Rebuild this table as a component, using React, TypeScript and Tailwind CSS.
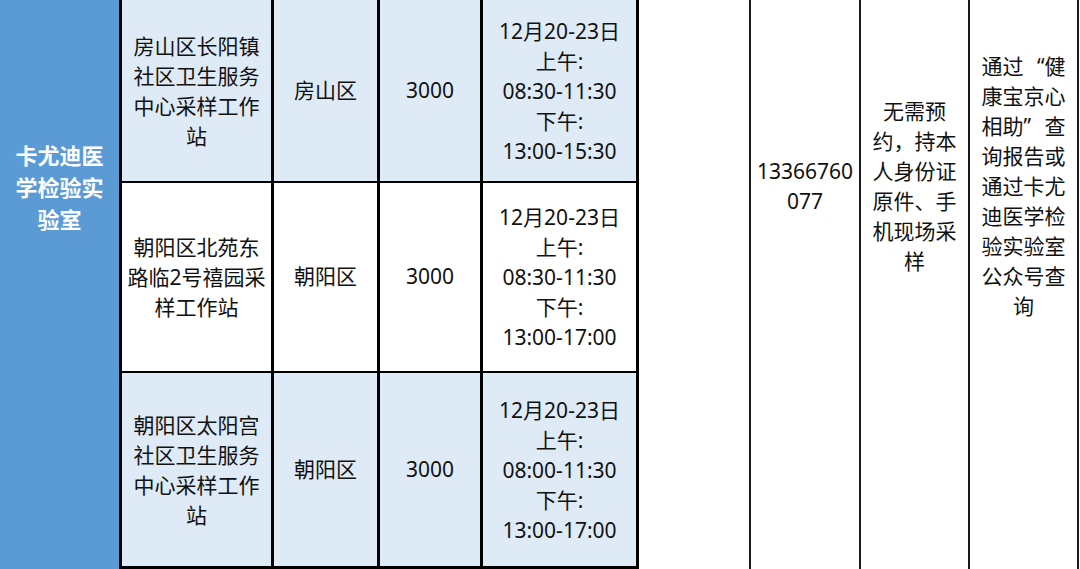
const rows = [
  {
    name: ["房山区长阳镇", "社区卫生服务", "中心采样工作", "站"],
    district: "房山区",
    cap: "3000",
    time: ["12月20-23日", "上午:", "08:30-11:30", "下午:", "13:00-15:30"],
    shaded: true,
  },
  {
    name: ["朝阳区北苑东", "路临2号禧园采", "样工作站"],
    district: "朝阳区",
    cap: "3000",
    time: ["12月20-23日", "上午:", "08:30-11:30", "下午:", "13:00-17:00"],
    shaded: false,
  },
  {
    name: ["朝阳区太阳宫", "社区卫生服务", "中心采样工作", "站"],
    district: "朝阳区",
    cap: "3000",
    time: ["12月20-23日", "上午:", "08:00-11:30", "下午:", "13:00-17:00"],
    shaded: true,
  },
];

const notes = ["无需预", "约，持本", "人身份证", "原件、手", "机现场采", "样"];

function Lines({ lines }: { lines: React.ReactNode[] }) {
  return (
    <div className="text-center leading-[30px]">
      {lines.map((l, i) => (
        <div key={i} className="whitespace-nowrap">
          {l}
        </div>
      ))}
    </div>
  );
}

function Cell({ shaded, children }: { shaded: boolean; children: React.ReactNode }) {
  return (
    <div
      className={`flex items-center justify-center ${shaded ? "bg-[#deeaf5]" : "bg-white"}`}
    >
      {children}
    </div>
  );
}

// full-width quote marks, as they sit in the sheet
const OpenQ = () => <span className="inline-block w-[1em] text-right">“</span>;
const CloseQ = () => <span className="inline-block w-[1em] text-left">”</span>;

const report: React.ReactNode[] = [
  <>
    通过
    <OpenQ />健
  </>,
  "康宝京心",
  <>
    相助
    <CloseQ />查
  </>,
  "询报告或",
  "通过卡尤",
  "迪医学检",
  "验实验室",
  "公众号查",
  "询",
];

export default function App() {
  return (
    <div className="flex h-[569px] w-[1080px] overflow-hidden bg-white font-['Noto_Sans','Noto_Sans_CJK_SC',sans-serif] text-[21px] text-[#111]">
      {/* merged lab name column */}
      <div className="w-[119px] shrink-0 bg-[#5b9bd5]">
        <div className="flex h-[374px] items-center justify-center">
          <div className="text-center text-[22px] font-bold leading-[32px] text-white">
            <div>卡尤迪医</div>
            <div>学检验实</div>
            <div>验室</div>
          </div>
        </div>
      </div>

      {/* site rows */}
      <div className="grid shrink-0 grid-cols-[149px_103px_100px_153px] grid-rows-[181px_188px_193px] gap-x-[3px] gap-y-[2px] self-start bg-black pb-[3px] pl-[3px] pr-[3px]">
        {rows.map((r, i) => (
          <div key={i} className="contents">
            <Cell shaded={r.shaded}>
              <Lines lines={r.name} />
            </Cell>
            <Cell shaded={r.shaded}>{r.district}</Cell>
            <Cell shaded={r.shaded}>{r.cap}</Cell>
            <Cell shaded={r.shaded}>
              <Lines lines={r.time} />
            </Cell>
          </div>
        ))}
      </div>

      {/* merged right columns */}
      <div className="flex flex-1">
        <div className="w-[112px] shrink-0 border-r-2 border-[#1a1a1a]" />
        <div className="w-[110px] shrink-0 border-r-2 border-[#1a1a1a]">
          <div className="flex h-[372px] items-center justify-center">
            <Lines lines={["13366760", "077"]} />
          </div>
        </div>
        <div className="w-[109px] shrink-0 border-r-2 border-[#1a1a1a]">
          <div className="flex h-[372px] items-center justify-center">
            <Lines lines={notes} />
          </div>
        </div>
        <div className="w-[109px] shrink-0 border-r-2 border-[#1a1a1a]">
          <div className="flex h-[372px] items-center justify-center">
            <Lines lines={report} />
          </div>
        </div>
        <div className="flex-1" />
      </div>
    </div>
  );
}
